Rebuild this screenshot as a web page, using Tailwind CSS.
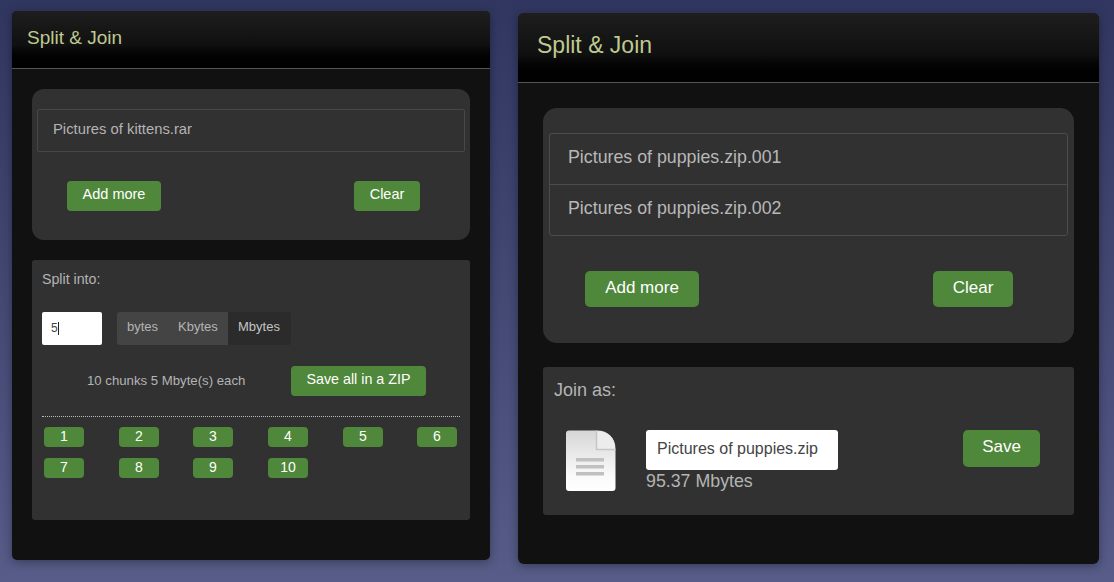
<!DOCTYPE html>
<html><head><meta charset="utf-8"><script src="https://cdn.jsdelivr.net/npm/@tailwindcss/browser@4"></script></head>
<body class="m-0">
<div class="flex w-[1114px] h-[582px] overflow-hidden font-['Liberation_Sans',Arial,sans-serif] bg-gradient-to-b from-[#30365f] to-[#575c88]">
  <!-- left -->
  <div class="w-[505px] shrink-0 pl-3 pt-[11px]">
    <div class="w-[478px] h-[549px] bg-[#111] rounded-[5px] shadow-[0_2px_10px_rgba(0,0,0,0.35)] flex flex-col">
      <div class="h-[58px] shrink-0 rounded-t-[5px] bg-gradient-to-b from-[#1e1e1e] via-[#101010] via-60% to-black border-b border-[#555] pl-[15px] pt-[14px] text-[19px] leading-[26px] text-[#bfc98f]">Split &amp; Join</div>
      <div class="mt-5 mx-5 h-[151px] shrink-0 bg-[#313131] rounded-[12px] pt-5 px-[5px]">
        <div class="h-[43px] border border-[#484848] rounded-[2px] pl-[15px] flex items-center text-[14.8px] text-[#b4b4b4] pb-[3px]">Pictures of kittens.rar</div>
        <div class="flex justify-between mt-[29px] pl-[30px] pr-[45px]">
          <div class="w-[94px] h-[30px] bg-[#4f873b] rounded-[4px] text-white text-[14.5px] flex items-center justify-center pb-[3px]">Add more</div>
          <div class="w-[66px] h-[30px] bg-[#4f873b] rounded-[4px] text-white text-[14.5px] flex items-center justify-center pb-[3px]">Clear</div>
        </div>
      </div>
      <div class="mt-5 mx-5 h-[260px] shrink-0 bg-[#313131] rounded-[3px] px-[10px] pt-[10px]">
        <div class="text-[14.2px] leading-[18px] text-[#b4b4b4]">Split into:</div>
        <div class="flex mt-[24px] h-[33px]">
          <div class="w-[60px] h-[33px] bg-white rounded-[2px] pl-[9px] flex items-center text-[12px] text-[#444] pb-[1px]">5<span class="w-px h-[13px] bg-[#222]"></span></div>
          <div class="ml-[15px] flex text-[13px] text-[#b4b4b4] h-[33px]">
            <div class="w-[111px] bg-[#444] rounded-l-[3px] flex items-center pb-[3px]"><span class="ml-[10px]">bytes</span><span class="ml-[20px]">Kbytes</span></div>
            <div class="w-[63px] bg-[#2b2b2b] rounded-r-[3px] flex items-center pb-[3px] pl-[10px] text-[#c4c4c4]">Mbytes</div>
          </div>
        </div>
        <div class="flex items-center mt-[21px] h-[30px]">
          <div class="w-[249px] pl-[45px] text-[13.2px] text-[#b4b4b4]">10 chunks 5 Mbyte(s) each</div>
          <div class="w-[135px] h-[30px] bg-[#4f873b] rounded-[4px] text-white text-[14.3px] flex items-center justify-center pb-[3px]">Save all in a ZIP</div>
        </div>
        <div class="mt-5 w-[418px] border-t border-dotted border-[#bbb]"></div>
        <div class="mt-[10px] grid grid-cols-[75px_74px_75px_75px_74px_40px] gap-y-[11px] pl-[2px] text-white text-[14px]">
          <div class="w-10 h-5 bg-[#4f873b] rounded-[4px] flex items-center justify-center pb-px">1</div>
          <div class="w-10 h-5 bg-[#4f873b] rounded-[4px] flex items-center justify-center pb-px">2</div>
          <div class="w-10 h-5 bg-[#4f873b] rounded-[4px] flex items-center justify-center pb-px">3</div>
          <div class="w-10 h-5 bg-[#4f873b] rounded-[4px] flex items-center justify-center pb-px">4</div>
          <div class="w-10 h-5 bg-[#4f873b] rounded-[4px] flex items-center justify-center pb-px">5</div>
          <div class="w-10 h-5 bg-[#4f873b] rounded-[4px] flex items-center justify-center pb-px">6</div>
          <div class="w-10 h-5 bg-[#4f873b] rounded-[4px] flex items-center justify-center pb-px">7</div>
          <div class="w-10 h-5 bg-[#4f873b] rounded-[4px] flex items-center justify-center pb-px">8</div>
          <div class="w-10 h-5 bg-[#4f873b] rounded-[4px] flex items-center justify-center pb-px">9</div>
          <div class="w-10 h-5 bg-[#4f873b] rounded-[4px] flex items-center justify-center pb-px">10</div>
        </div>
      </div>
    </div>
  </div>
  <!-- right -->
  <div class="flex-1 pl-[13px] pt-[13px]">
    <div class="w-[581px] h-[551px] bg-[#111] rounded-[6px] shadow-[0_2px_10px_rgba(0,0,0,0.35)] flex flex-col">
      <div class="h-[70px] shrink-0 rounded-t-[6px] bg-gradient-to-b from-[#1e1e1e] via-[#101010] via-60% to-black border-b border-[#555] pl-[19px] pt-[16px] text-[23px] leading-[32px] text-[#bfc98f]">Split &amp; Join</div>
      <div class="mt-[25px] mx-[25px] h-[235px] shrink-0 bg-[#313131] rounded-[14px] pt-[25px] px-[6px]">
        <div class="h-[103px] border border-[#4c4c4c] rounded-[3px] text-[17.8px] text-[#b8b8b8]">
          <div class="h-[51px] border-b border-[#4c4c4c] pl-[18px] flex items-center pb-[4px]">Pictures of puppies.zip.001</div>
          <div class="h-[51px] pl-[18px] flex items-center pb-[4px]">Pictures of puppies.zip.002</div>
        </div>
        <div class="flex mt-[35px] pl-[36px]">
          <div class="w-[114px] h-[36px] bg-[#4f873b] rounded-[5px] text-white text-[17px] flex items-center justify-center pb-[3px]">Add more</div>
          <div class="w-[80px] h-[36px] ml-[234px] bg-[#4f873b] rounded-[5px] text-white text-[17px] flex items-center justify-center pb-[3px]">Clear</div>
        </div>
      </div>
      <div class="mt-[24px] mx-[25px] h-[148px] shrink-0 bg-[#313131] rounded-[3px] pl-[11px] pt-[12px]">
        <div class="text-[18px] leading-[22px] text-[#b4b4b4]">Join as:</div>
        <div class="flex mt-[29px]">
          <svg class="ml-[12px] shrink-0" width="50" height="62" viewBox="0 0 50 62">
            <defs><linearGradient id="g" x1="0" y1="0" x2="0" y2="1"><stop offset="0" stop-color="#d6d6d6"/><stop offset="0.75" stop-color="#fafafa"/><stop offset="1" stop-color="#ffffff"/></linearGradient></defs>
            <path d="M3 0.5H31C42 0.5 49.5 8 49.5 19V58a3 3 0 0 1-3 3H3a3 3 0 0 1-3-3V3.5a3 3 0 0 1 3-3z" fill="url(#g)"/>
            <path d="M30.5 0.5V19.5H49.5" fill="none" stroke="#c6c6c6" stroke-width="1.5"/>
            <path d="M31.5 1C42 1 49 8 49 18.5H31.5z" fill="#ececec"/>
            <rect x="10" y="28" width="28" height="3.5" fill="#c0c0c0"/>
            <rect x="10" y="35" width="28" height="3.5" fill="#c0c0c0"/>
            <rect x="10" y="42" width="28" height="3.5" fill="#c0c0c0"/>
          </svg>
          <div class="ml-[30px] w-[192px] shrink-0">
            <div class="h-10 bg-white rounded-[3px] pl-[11px] flex items-center text-[16px] text-[#444] pb-[3px]">Pictures of puppies.zip</div>
            <div class="text-[17.8px] leading-[22px] text-[#b4b4b4]">95.37 Mbytes</div>
          </div>
          <div class="ml-[125px] w-[77px] h-[37px] bg-[#4f873b] rounded-[5px] text-white text-[17px] flex items-center justify-center pb-[4px]">Save</div>
        </div>
      </div>
    </div>
  </div>
</div>
</body></html>
